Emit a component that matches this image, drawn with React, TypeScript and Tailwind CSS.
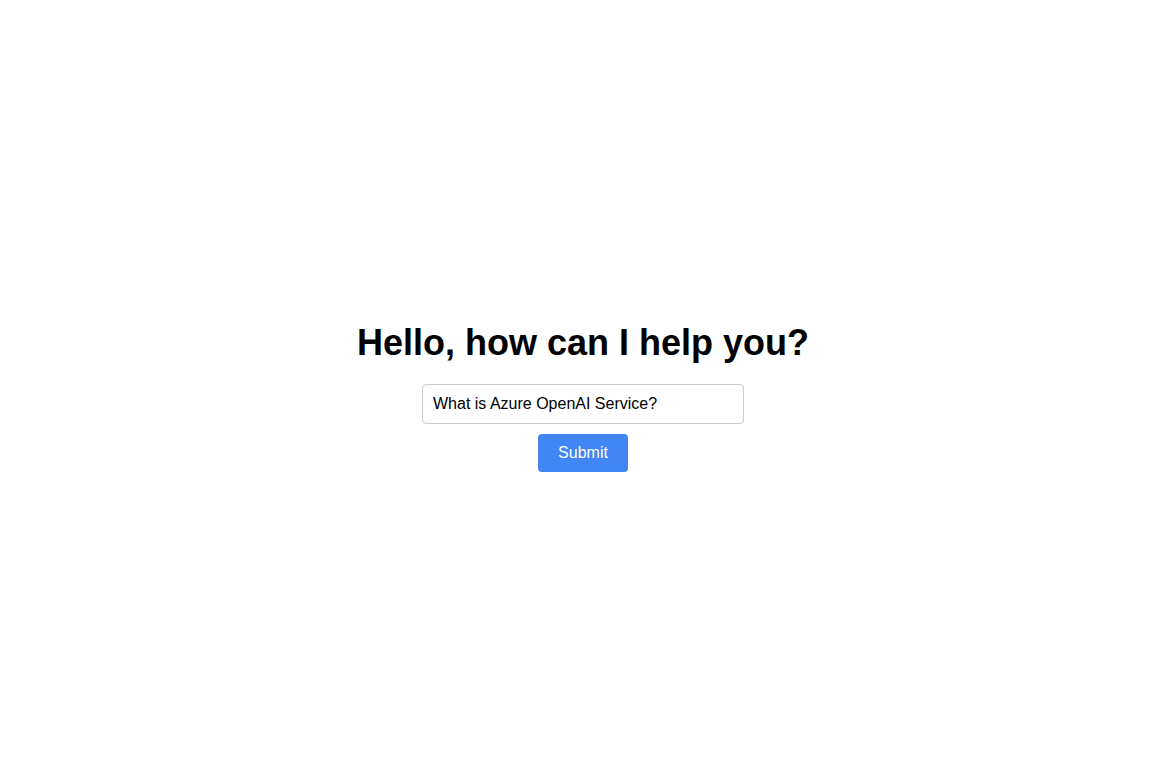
import React, { useState } from 'react'

export default function App() {
  const [question, setQuestion] = useState('What is Azure OpenAI Service?');

  return (
    <div className="flex h-screen w-full flex-col items-center justify-center bg-white font-['Liberation_Sans',Arial,sans-serif] text-black">
      <h1 className="mt-[26px] mb-[21px] text-[36px] font-bold leading-[41px]">Hello, how can I help you?</h1>
      <form
        className="flex flex-col items-center gap-[10px]"
        onSubmit={(e) => e.preventDefault()}
      >
        <input
          type="text"
          value={question}
          onChange={(e) => setQuestion(e.target.value)}
          className="h-10 w-[322px] rounded border border-[#ccc] px-[10px] text-base outline-none"
        />
        <button
          type="submit"
          className="h-[38px] w-[90px] rounded bg-[#4285f4] text-base text-white"
        >
          Submit
        </button>
      </form>
    </div>
  )
}
